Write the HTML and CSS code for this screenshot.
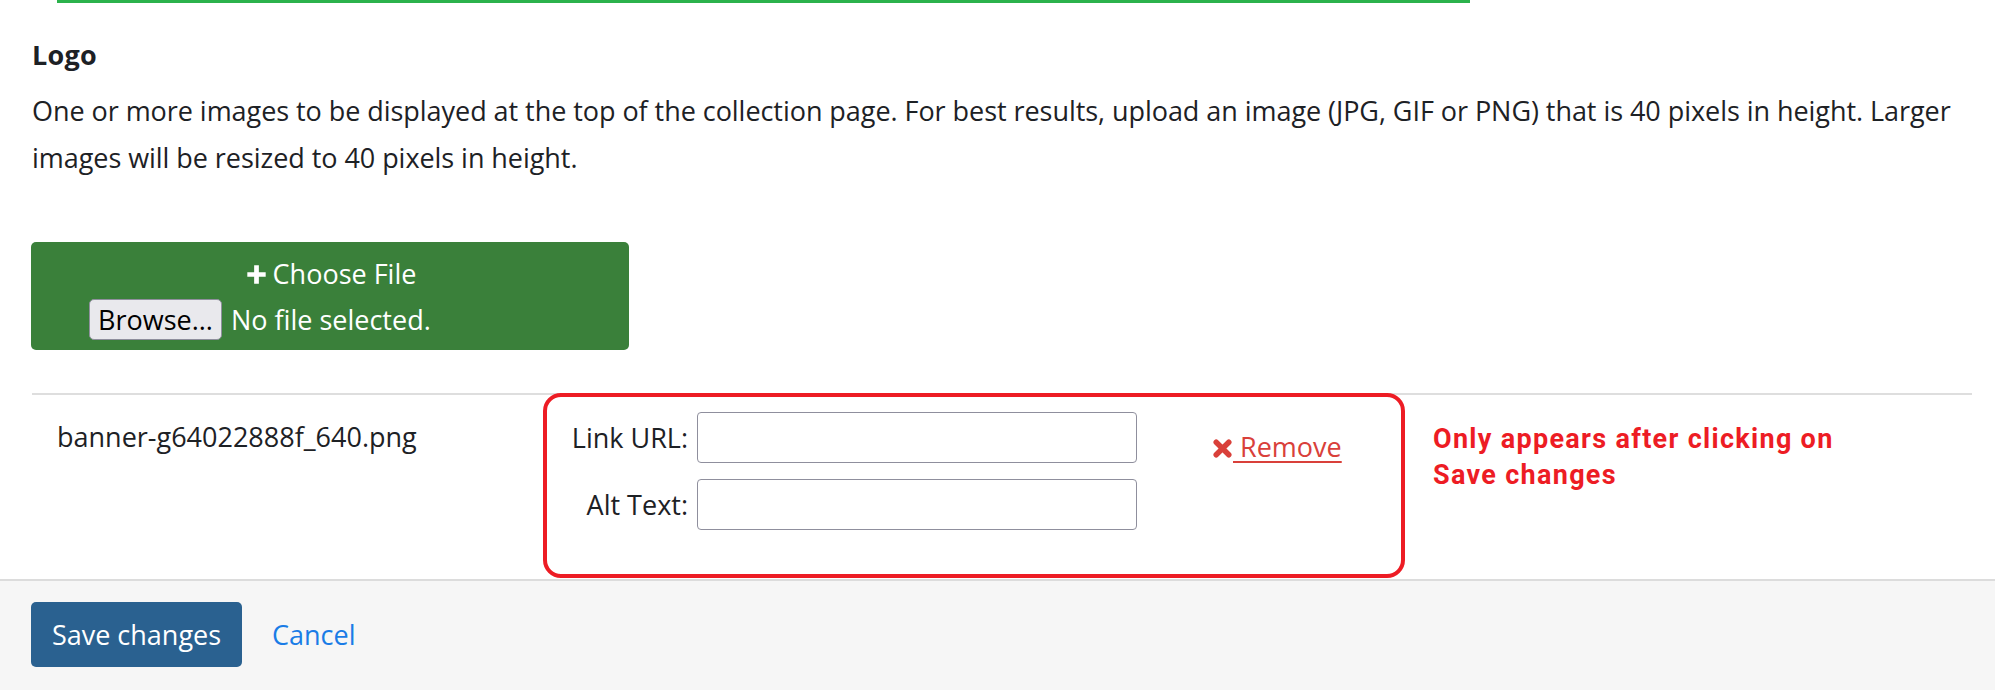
FILE: index.html
```html
<!DOCTYPE html>
<html lang="en">
<head>
<meta charset="utf-8">
<title>Logo</title>
<link rel="stylesheet" href="styles.css">
</head>
<body>
<div class="page">
  <div class="content">
    <div class="progress-line"></div>
    <h3 class="field-title">Logo</h3>
    <p class="field-help">One or more images to be displayed at the top of the collection page. For best results, upload an image (JPG, GIF or PNG) that is 40 pixels in height. Larger images will be resized to 40 pixels in height.</p>
    <div class="upload-btn">
      <div class="upload-label"><svg class="plus" viewBox="0 0 16 16" width="21" height="21"><path d="M6.2 1h3.6v5.2H15v3.6H9.8V15H6.2V9.8H1V6.2h5.2z" fill="#fff"/></svg><span>Choose File</span></div>
      <div class="file-row"><span class="browse">Browse...</span><span class="nofile">No file selected.</span></div>
    </div>
    <div class="logo-row">
      <div class="filename">banner-g64022888f_640.png</div>
      <div class="highlight-box">
        <div class="fields">
          <label class="lbl">Link URL:</label>
          <input class="txt" type="text">
          <label class="lbl">Alt Text:</label>
          <input class="txt" type="text">
        </div>
        <a class="remove" href="#"><svg class="xicon" viewBox="0 0 20 20" width="21" height="21"><path d="M4 4 16 16M16 4 4 16" stroke="#d9403a" stroke-width="5.2" stroke-linecap="round"/></svg><span class="rm-text"> Remove</span></a>
      </div>
      <div class="note">Only appears after clicking on<br>Save changes</div>
    </div>
  </div>
  <div class="footer">
    <button class="save" type="button">Save changes</button>
    <a class="cancel" href="#">Cancel</a>
  </div>
</div>
</body>
</html>
```
FILE: styles.css
```css
* { box-sizing: border-box; }
html, body { margin: 0; padding: 0; background: #fff; }
body {
  font-family: "Open Sans", "Noto Sans", sans-serif;
  font-size: 27px;
  color: #1d2125;
}
.page { width: 1995px; height: 690px; overflow: hidden; display: flex; flex-direction: column; }
.content { padding: 0 23px 0 32px; }
.progress-line {
  height: 3px;
  width: 1413px;
  margin-left: 25px;
  background: #2bb24c;
}
.field-title {
  margin: 37px 0 0;
  font-size: 27px;
  font-weight: 700;
  line-height: 30px;
  letter-spacing: 0.3px;
}
.field-help {
  margin: 17px 0 0;
  line-height: 47px;
  letter-spacing: -0.05px;
}
.upload-btn {
  margin-top: 61px;
  width: 598px;
  height: 108px;
  margin-left: -1px;
  background: #3a803a;
  border-radius: 5px;
  color: #fff;
  padding-top: 17px;
}
.upload-label {
  display: flex;
  justify-content: center;
  align-items: center;
  gap: 6px;
  line-height: 30px;
  padding-left: 2px;
}
.plus { display: block; }
.file-row {
  display: flex;
  align-items: center;
  gap: 9px;
  margin-left: 58px;
  margin-top: 10px;
}
.browse {
  display: inline-block;
  height: 41px;
  line-height: 39px;
  padding: 0 8px;
  background: #e9e9ed;
  border: 1px solid #8f8f9d;
  border-radius: 5px;
  color: #000;
  font-size: 27px;
}
.nofile { line-height: 41px; }
.logo-row {
  margin-top: 43px;
  border-top: 2px solid #dedede;
  display: flex;
  align-items: flex-start;
  height: 186px;
}
.filename {
  width: 511px;
  padding: 27px 0 0 25px;
  line-height: 30px;
}
.highlight-box {
  margin-top: -2px;
  width: 862px;
  height: 185px;
  border: 4px solid #ed1c24;
  border-radius: 18px;
  display: flex;
  align-items: flex-start;
  padding-top: 15px;
}
.fields {
  display: grid;
  grid-template-columns: 141px 440px;
  column-gap: 9px;
  row-gap: 16px;
  align-items: center;
}
.lbl { text-align: right; line-height: 30px; }
.txt {
  height: 51px;
  width: 440px;
  border: 1px solid #8f8f9d;
  border-radius: 4px;
  font: inherit;
  margin: 0;
}
.remove {
  margin: 20px 0 0 75px;
  color: #d9403a;
  text-decoration: none;
  display: flex;
  align-items: center;
  line-height: 30px;
}
.xicon { display: block; margin-top: 2px; }
.rm-text { text-decoration: underline; text-underline-offset: 4px; text-decoration-thickness: 2px; white-space: pre; }
.note {
  margin-left: 28px;
  padding-top: 26px;
  font-family: "Roboto", "Liberation Sans", sans-serif;
  font-weight: 700;
  font-size: 27px;
  line-height: 36px;
  letter-spacing: 1.3px;
  color: #ed1c24;
}
.footer {
  flex: 1;
  background: #f6f6f6;
  border-top: 2px solid #dcdcdc;
  padding: 21px 0 0 31px;
  display: flex;
  align-items: flex-start;
  gap: 30px;
}
.save {
  height: 65px;
  width: 211px;
  background: #2a6190;
  border: none;
  border-radius: 5px;
  color: #fff;
  font: inherit;
  padding: 0;
}
.cancel {
  color: #1a7ce6;
  text-decoration: none;
  line-height: 65px;
}
```
